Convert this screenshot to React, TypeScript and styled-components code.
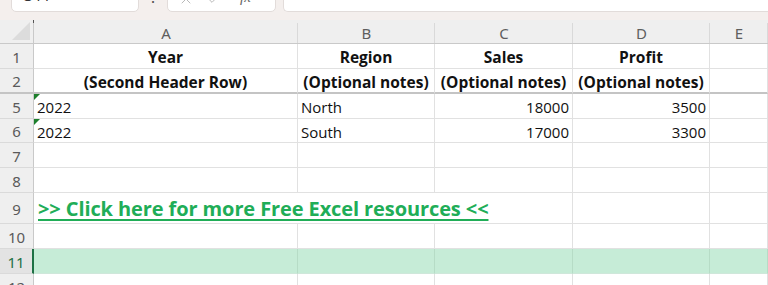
import React from "react";
import styled, { createGlobalStyle, css } from "styled-components";
import { X, Check, ChevronDown } from "lucide-react";

const Global = createGlobalStyle`
  html, body { margin: 0; padding: 0; background: #ffffff; overflow: hidden; }
  * { box-sizing: border-box; }
`;

const FONT = `"Open Sans", "Noto Sans", sans-serif`;
const UI_FONT = `"Noto Sans", "Open Sans", sans-serif`;

const Window = styled.div`
  width: 768px;
  height: 285px;
  display: flex;
  flex-direction: column;
  overflow: hidden;
`;

const Toolbar = styled.div`
  height: 20px;
  flex: 0 0 20px;
  background: #f4efed;
  display: flex;
  align-items: flex-end;
  padding: 0 0 8px 11px;
  overflow: hidden;
`;

const NameBox = styled.div`
  width: 128px;
  height: 26px;
  flex: 0 0 auto;
  background: #ffffff;
  border: 1px solid #e2dcda;
  border-radius: 5px;
  display: flex;
  align-items: flex-start;
  justify-content: space-between;
  padding: 0 8px 0 10px;
  font-family: ${UI_FONT};
  font-size: 15px;
  line-height: 16px;
  color: #333;
`;

const Dots = styled.div`
  width: 28px;
  flex: 0 0 auto;
  display: flex;
  justify-content: center;
  align-items: flex-end;
  height: 26px;
  color: #555;
  font-size: 16px;
  line-height: 16px;
  padding-bottom: 8px;
  font-family: ${UI_FONT};
`;

const FxBox = styled.div`
  width: 109px;
  height: 26px;
  flex: 0 0 auto;
  background: #ffffff;
  border: 1px solid #e2dcda;
  border-radius: 5px;
  display: flex;
  align-items: flex-start;
  gap: 12px;
  padding: 4px 6px 0 10px;
  color: #b9b9b9;
  font-family: "Liberation Serif", serif;
`;

const FxText = styled.span`
  font-style: italic;
  font-size: 15px;
  line-height: 12px;
  color: #666;
  margin-left: 6px;
`;

const FormulaBar = styled.div`
  flex: 1 1 auto;
  height: 26px;
  margin-left: 7px;
  background: #ffffff;
  border: 1px solid #e2dcda;
  border-right: none;
  border-radius: 5px 0 0 5px;
`;

const Sheet = styled.div`
  flex: 1 1 auto;
  display: grid;
  grid-template-columns: 34px 264px 137px 138px 137px 1fr;
  grid-template-rows: 24px 25px 25px 25px 24px 25px 25px 31px 25px 25px 25px;
  background: #ffffff;
`;

const Corner = styled.div`
  background: #efefef;
  border-right: 1px solid #c9c9c9;
  border-bottom: 1px solid #c9c9c9;
  position: relative;
  &::before {
    content: "";
    position: absolute;
    top: 0;
    right: -1px;
    width: 1px;
    height: 3px;
    background: #555;
  }
  &::after {
    content: "";
    position: absolute;
    right: 3px;
    bottom: 3px;
    width: 0;
    height: 0;
    border-left: 18px solid transparent;
    border-bottom: 18px solid #dcdcdc;
  }
`;

const ColHead = styled.div`
  background: #efefef;
  border-bottom: 1px solid #c9c9c9;
  display: flex;
  align-items: center;
  justify-content: center;
  font-family: ${UI_FONT};
  font-size: 15px;
  color: #5e5e5e;
  position: relative;
  padding-top: 3px;
  &::after {
    content: "";
    position: absolute;
    right: 0;
    top: 3px;
    bottom: 0;
    width: 1px;
    background: #d9d9d9;
  }
`;

const RowHead = styled.div<{ $selected?: boolean; $frozen?: boolean }>`
  background: ${(p) => (p.$selected ? "#e3e3e3" : "#efefef")};
  border-right: 1px solid #c9c9c9;
  border-bottom: 1px solid #dadada;
  display: flex;
  align-items: center;
  justify-content: center;
  font-family: ${UI_FONT};
  font-size: 15px;
  color: #5a5a5a;
  padding-top: 1px;
  ${(p) =>
    p.$frozen &&
    css`
      border-bottom: 2px solid #c4c4c4;
    `}
  ${(p) =>
    p.$selected &&
    css`
      color: #1e7145;
      border-right: 2px solid #1e7145;
    `}
`;

const Cell = styled.div<{
  $align?: "left" | "center" | "right";
  $bold?: boolean;
  $selected?: boolean;
  $frozen?: boolean;
  $flag?: boolean;
}>`
  border-right: 1px solid #e1e1e1;
  border-bottom: 1px solid #e1e1e1;
  display: flex;
  align-items: center;
  justify-content: ${(p) =>
    p.$align === "right" ? "flex-end" : p.$align === "center" ? "center" : "flex-start"};
  padding: 2px 3px 0 3px;
  font-family: ${FONT};
  font-size: ${(p) => (p.$bold ? "15.5px" : "15px")};
  font-weight: ${(p) => (p.$bold ? 700 : 400)};
  color: #111;
  white-space: nowrap;
  position: relative;
  overflow: visible;
  ${(p) =>
    p.$frozen &&
    css`
      border-bottom: 2px solid #c4c4c4;
    `}
  ${(p) =>
    p.$selected &&
    css`
      background: #c6ecd7;
      border-right-color: #b6dcc6;
      border-bottom-color: #cfe7da;
    `}
  ${(p) =>
    p.$flag &&
    css`
      &::before {
        content: "";
        position: absolute;
        left: 0;
        top: 0;
        width: 0;
        height: 0;
        border-top: 6px solid #1d7f2c;
        border-right: 6px solid transparent;
      }
    `}
`;

const LinkCell = styled.div`
  grid-column: 2 / span 2;
  border-bottom: 1px solid #e1e1e1;
  display: flex;
  align-items: center;
  padding: 1px 3px 0 4px;
  position: relative;
  z-index: 1;
  overflow: visible;
  white-space: nowrap;
`;

const LinkText = styled.a`
  font-family: ${FONT};
  font-size: 20px;
  font-weight: 700;
  letter-spacing: -0.1px;
  color: #20ad57;
  text-decoration: underline;
  text-decoration-thickness: 2px;
  text-underline-offset: 3px;
  cursor: pointer;
`;

const Filler = styled.div`
  border-right: 1px solid #e1e1e1;
  border-bottom: 1px solid #e1e1e1;
`;

type RowDef = {
  n: string;
  cells: { text?: string; align?: "left" | "center" | "right"; bold?: boolean; flag?: boolean }[];
  frozen?: boolean;
  selected?: boolean;
};

const rows: RowDef[] = [
  {
    n: "1",
    cells: [
      { text: "Year", align: "center", bold: true },
      { text: "Region", align: "center", bold: true },
      { text: "Sales", align: "center", bold: true },
      { text: "Profit", align: "center", bold: true },
      {},
    ],
  },
  {
    n: "2",
    frozen: true,
    cells: [
      { text: "(Second Header Row)", align: "center", bold: true },
      { text: "(Optional notes)", align: "center", bold: true },
      { text: "(Optional notes)", align: "center", bold: true },
      { text: "(Optional notes)", align: "center", bold: true },
      {},
    ],
  },
  {
    n: "5",
    cells: [
      { text: "2022", flag: true },
      { text: "North" },
      { text: "18000", align: "right" },
      { text: "3500", align: "right" },
      {},
    ],
  },
  {
    n: "6",
    cells: [
      { text: "2022", flag: true },
      { text: "South" },
      { text: "17000", align: "right" },
      { text: "3300", align: "right" },
      {},
    ],
  },
  { n: "7", cells: [{}, {}, {}, {}, {}] },
  { n: "8", cells: [{}, {}, {}, {}, {}] },
];

const after: RowDef[] = [
  { n: "10", cells: [{}, {}, {}, {}, {}] },
  { n: "11", selected: true, cells: [{}, {}, {}, {}, {}] },
  { n: "12", cells: [{}, {}, {}, {}, {}] },
];

const renderRow = (r: RowDef) => (
  <React.Fragment key={r.n}>
    <RowHead $frozen={r.frozen} $selected={r.selected}>
      {r.n}
    </RowHead>
    {r.cells.map((c, i) => (
      <Cell
        key={i}
        $align={c.align}
        $bold={c.bold}
        $flag={c.flag}
        $frozen={r.frozen}
        $selected={r.selected}
      >
        {c.text}
      </Cell>
    ))}
  </React.Fragment>
);

export default function App() {
  return (
    <Window>
      <Global />
      <Toolbar>
        <NameBox>
          <span>O11</span>
          <ChevronDown size={14} color="#555" />
        </NameBox>
        <Dots>⋮</Dots>
        <FxBox>
          <X size={16} strokeWidth={1.5} />
          <Check size={16} strokeWidth={1.5} />
          <FxText>fx</FxText>
        </FxBox>
        <FormulaBar />
      </Toolbar>
      <Sheet>
        <Corner />
        {["A", "B", "C", "D", "E"].map((l) => (
          <ColHead key={l}>{l}</ColHead>
        ))}
        {rows.map(renderRow)}
        <RowHead>9</RowHead>
        <LinkCell>
          <LinkText>&gt;&gt; Click here for more Free Excel resources &lt;&lt;</LinkText>
        </LinkCell>
        <Filler />
        <Filler />
        <Filler />
        {after.map(renderRow)}
      </Sheet>
    </Window>
  );
}
